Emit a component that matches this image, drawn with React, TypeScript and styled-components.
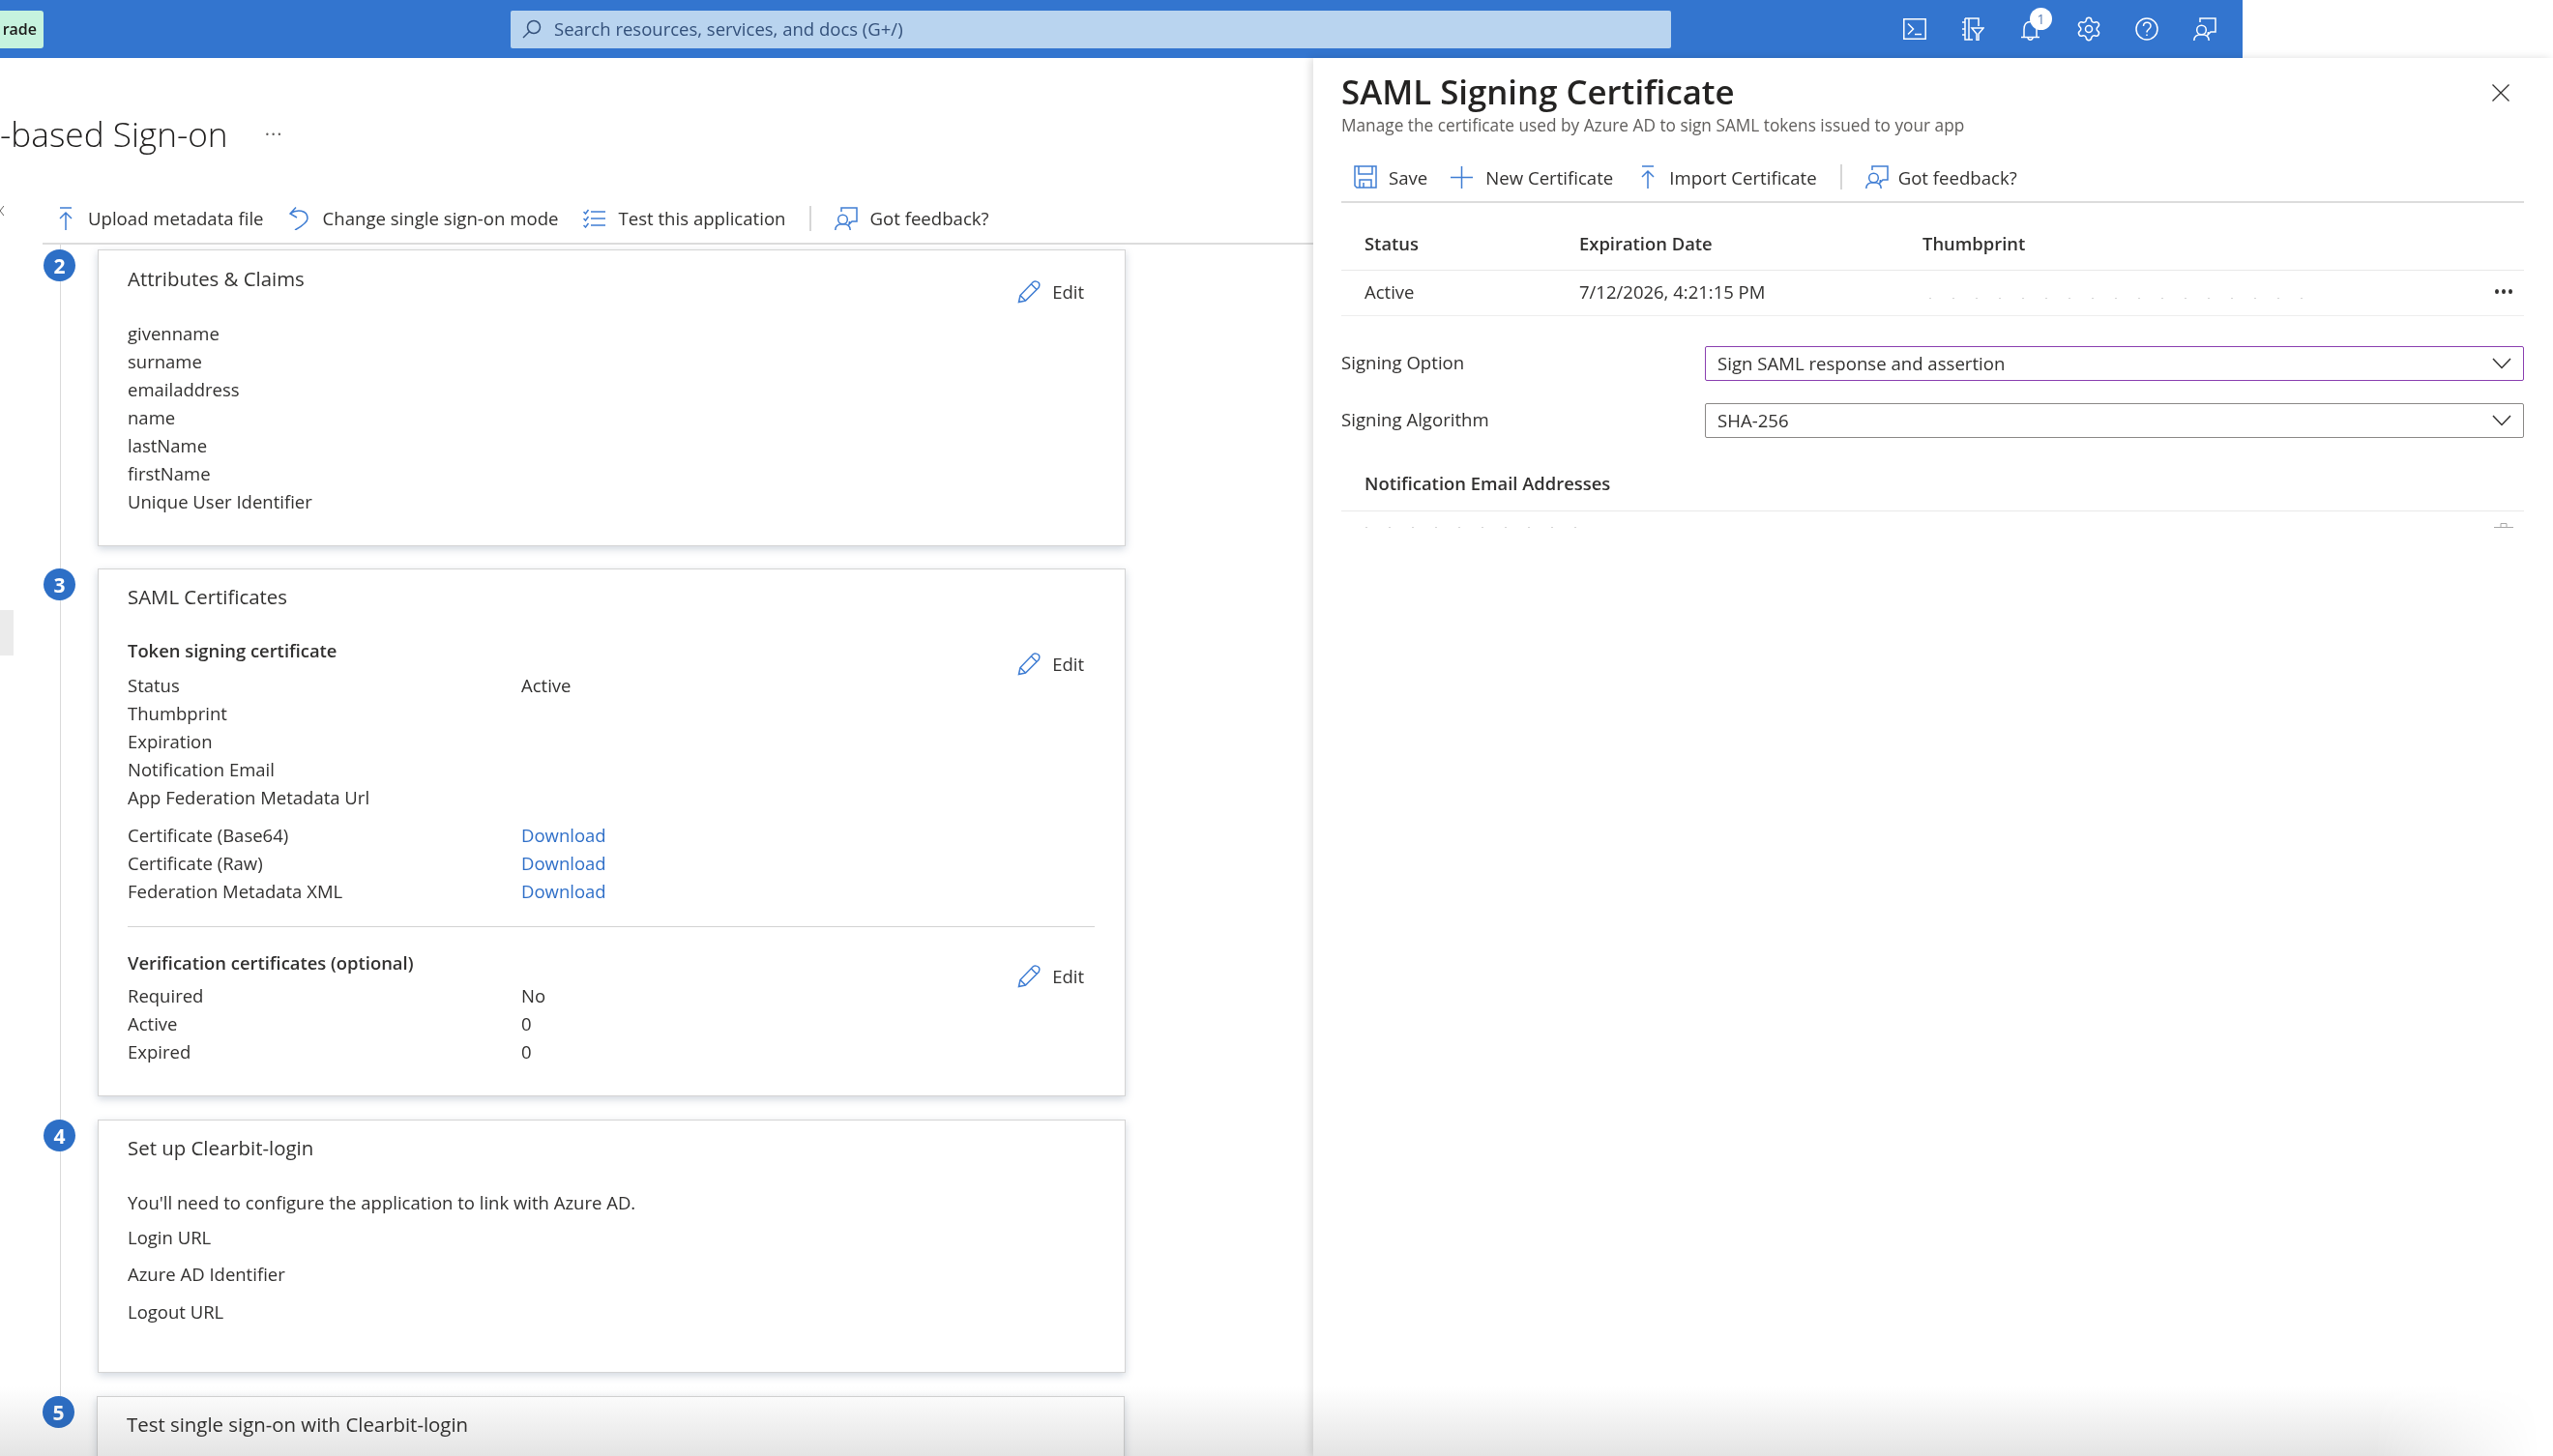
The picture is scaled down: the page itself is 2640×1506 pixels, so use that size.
import React from 'react';
import styled, { createGlobalStyle } from 'styled-components';
import { Settings } from 'lucide-react';

const Global = createGlobalStyle`
  html, body { margin:0; padding:0; background:#fff; }
  body { font-family:"Open Sans","Noto Sans","Liberation Sans",sans-serif; color:#323130; }
  * { box-sizing:border-box; }
`;

const BLUE = '#3f7dd3';

const Page = styled.div`
  width:2640px; height:1506px; overflow:hidden; position:relative; background:#fff;
  display:flex; flex-direction:column;
`;
const TopBar = styled.header`
  width:2319px; height:60px; background:#3375cf; flex:none;
  display:flex; align-items:center; position:relative;
`;
const Upgrade = styled.div`
  width:45px; height:39px; background:#c6f3de; border-radius:0 3px 3px 0; margin-right:483px;
  display:flex; align-items:center; justify-content:flex-end; padding-right:7px;
  font-size:16px; font-weight:600; color:#1b1a19; overflow:hidden;
`;
const Search = styled.div`
  width:1200px; height:39px; background:#b9d4ef; border-radius:2px;
  display:flex; align-items:center; padding:0 0 1px 12px; gap:13px;
  font-size:18.5px; color:#33507a;
`;
const TopIcons = styled.div`
  margin-left:240px; display:flex; align-items:center; gap:36px;
`;
const TopIcon = styled.span`
  width:24px; height:30px; display:flex; align-items:center; justify-content:center; position:relative;
  color:#fff;
  svg { flex:none; }
`;
const Badge = styled.span`
  position:absolute; top:-7px; left:11px; width:23px; height:23px; border-radius:50%;
  background:#fff; color:#5b7fb5; font-size:14px; display:flex; align-items:center; justify-content:center;
`;

const Body = styled.div`display:flex; flex:1; min-height:0;`;
const Main = styled.main`
  width:1358px; flex:none; overflow:hidden; position:relative;
`;
const TitleRow = styled.div`
  height:144px; padding-top:54px; display:flex; align-items:flex-start;
`;
const PageTitle = styled.h1`
  margin:0; font-size:35.2px; font-weight:300; color:#1f1e1d; white-space:nowrap; line-height:48px;
`;
const More = styled.span`
  margin-left:38px; font-size:20px; color:#605e5c; letter-spacing:1px; line-height:1; margin-top:15px;
`;
const CommandBar = styled.div<{ $panel?: boolean }>`
  display:flex; align-items:center; border-bottom:2px solid #dcdcdc;
  height:${p => (p.$panel ? '67px' : '49px')};
  padding-top:${p => (p.$panel ? '15px' : '0')};
  padding-bottom:${p => (p.$panel ? '0' : '4px')};
  padding-left:${p => (p.$panel ? '13px' : '17px')};
  margin-left:${p => (p.$panel ? '0' : '44px')};
`;
const Cmd = styled.span<{ $gap?: number; $ml?: number }>`
  display:flex; align-items:center; gap:${p => p.$gap ?? 12}px; margin-left:${p => p.$ml ?? 0}px;
  font-size:18.6px; color:#323130; white-space:nowrap;
`;
const CmdSep = styled.span`width:2px; height:26px; background:#d6d6d6; margin:0 24px;`;
const Collapse = styled.span`position:absolute; left:0; top:152px; display:flex;`;
const Steps = styled.div`
  position:relative; padding-left:101px; padding-top:5px;
  &:before { content:""; position:absolute; left:62px; top:0; height:1200px; width:1px; background:#d9d9d9; }
`;
const Step = styled.section<{ $mb?: number; $nudge?: number }>`
  position:relative; margin-bottom:${p => p.$mb ?? 24}px; margin-left:${p => p.$nudge ?? 0}px;
`;
const StepNum = styled.span`
  position:absolute; left:-56px; top:0; width:33px; height:33px; border-radius:50%;
  background:#2d6fc6; color:#fff; font-size:21px; font-weight:700; display:flex; align-items:center; justify-content:center;
`;
const Card = styled.div<{ $h: number }>`
  width:1063px; height:${p => p.$h}px; border:1px solid #d4d4d4; background:#fff; padding:0 30px;
  box-shadow:0 3px 8px rgba(90,110,140,.28); position:relative;
`;
const CardTitle = styled.div<{ $mb?: number; $pt?: number }>`
  font-size:20.4px; line-height:30px; padding-top:${p => p.$pt ?? 14}px; margin-bottom:${p => p.$mb ?? 26}px; color:#323130;
`;
const Line = styled.div<{ $h?: number }>`
  font-size:18.5px; line-height:${p => p.$h ?? 29}px; height:${p => p.$h ?? 29}px; color:#323130; white-space:nowrap;
`;
const KV = styled.div`
  display:grid; grid-template-columns:407px 1fr; font-size:18.5px; line-height:29px; color:#323130;
`;
const SubHead = styled.div<{ $mb?: number }>`
  font-size:18.4px; font-weight:600; line-height:30px; margin-bottom:${p => p.$mb ?? 6}px; color:#323130;
`;
const Link = styled.span`color:#2f6fc8;`;
const EditBtn = styled.span<{ $top: number }>`
  position:absolute; right:42px; top:${p => p.$top}px; display:flex; align-items:center; gap:12px;
  font-size:18.5px; line-height:28px; color:#323130;
`;
const Rule = styled.div`height:1px; background:#d2d2d2; margin:22px 0; width:1000px;`;
const Spacer = styled.div`height:10px;`;
const Fade = styled.div`
  position:absolute; left:0; right:0; bottom:0; height:72px; pointer-events:none; mix-blend-mode:multiply;
  background:linear-gradient(#fff, #e4e4e4);
  mask-image:linear-gradient(to right, #000 93%, transparent 99.5%);
`;
const Strip = styled.div`position:absolute; left:0; top:571px; width:14px; height:47px; background:#ebebeb;`;

const Panel = styled.aside`
  flex:1; background:#fff; padding:0 30px 0 29px; position:relative; min-width:0;
  box-shadow:-3px 0 8px rgba(0,0,0,.13);
`;
const PanelTitle = styled.h2`
  margin:0; padding-top:13px; font-size:34.8px; line-height:44px; font-weight:600; color:#242322;
`;
const PanelSub = styled.div`font-size:17.25px; line-height:26px; color:#605e5c;`;
const Close = styled.span`position:absolute; right:45px; top:27px; display:flex;`;
const TableHead = styled.div`
  display:grid; grid-template-columns:222px 355px 1fr; padding:13px 0 0 24px; height:70px; align-items:center;
  font-size:18.4px; font-weight:600; border-bottom:1px solid #e9e9e9;
`;
const TableRow = styled.div`
  display:grid; grid-template-columns:222px 355px 1fr 30px; padding:0 0 3px 24px; height:47px; align-items:center;
  font-size:18.5px; border-bottom:1px solid #ededed;
`;
const Specks = styled.span<{ $w: number }>`
  display:block; width:${p => p.$w}px; height:1px;
  background:repeating-linear-gradient(to right, #d4d4d4 0 2px, transparent 2px 24px);
`;
const ThumbCell = styled.span`display:flex; padding:14px 0 0 7px;`;
const Dots = styled.span`display:flex; gap:3px; justify-content:center; padding-right:12px;`;
const Dot = styled.i`width:5px; height:5px; border-radius:50%; background:#323130; display:block;`;
const Field = styled.div<{ $mt: number }>`
  display:grid; grid-template-columns:376px 1fr; align-items:center; margin-top:${p => p.$mt}px;
  font-size:18.6px;
  & > span { padding-bottom:3px; }
`;
const Select = styled.div<{ $focus?: boolean }>`
  height:36px; border:1px solid ${p => (p.$focus ? '#8a3fb0' : '#8a8886')}; border-radius:2px;
  display:flex; align-items:center; justify-content:space-between; padding:0 12px 2px;
  svg { margin-top:2px; }
`;
const EmailHead = styled.div`
  margin-top:30px; height:46px; padding:0 0 12px 24px; display:flex; align-items:center;
  font-size:18.4px; font-weight:600; border-bottom:1px solid #e9e9e9;
`;
const EmailRow = styled.div`
  height:17px; display:flex; align-items:flex-end; justify-content:space-between; padding:0 11px 0 25px;
`;

const Svg = styled.svg<{ $w?: number; $h?: number; $c?: string; $sw?: number }>`
  width:${p => p.$w ?? 24}px; height:${p => p.$h ?? 24}px; fill:none; stroke:${p => p.$c ?? BLUE};
  stroke-width:${p => p.$sw ?? 1.5}; flex:none; display:block;
`;

const UploadIcon = () => (
  <Svg viewBox="0 0 14 24" $w={14} $h={24}><path d="M1 1h12M7 24V6M1 12l6-6 6 6" /></Svg>
);
const UndoIcon = () => (
  <Svg viewBox="0 0 20 24" $w={20} $h={24}><path d="M7 .5L1 7l7 4M1 7c7-5 18-4 18 5 0 4-6 8-13 12" /></Svg>
);
const ListIcon = () => (
  <Svg viewBox="0 0 23 20" $w={23} $h={20}>
    <path d="M8 3h15M8 10h15M8 17h15M.5 3l2 2 3-4M.5 10l2 2 3-4M.5 17l2 2 3-4" />
  </Svg>
);
const FeedbackIcon = ({ c }: { c?: string }) => (
  <Svg viewBox="0 0 24 24" $w={24} $h={24} $c={c}>
    <path d="M7 5V1h16v14h-5l-3 3 .5-3" />
    <circle cx="8.500" cy="13" r="4.800" />
    <path d="M.8 24c0-5 3-6.200 7.700-6.200s7.700 1.200 7.700 6.200" />
  </Svg>
);
const PencilIcon = () => (
  <Svg viewBox="0 0 24 24" $w={24} $h={24}>
    <path d="M1.500 22.500l1.500-7L16.500 1.500c1.500-1 4.500-.5 6 1.500.5 1.500.5 3-.5 4.500L8.500 21zM3 15.500L8.500 21M14.500 4l5.500 5.500" />
  </Svg>
);
const EditAction = ({ top }: { top: number }) => (
  <EditBtn $top={top}><PencilIcon />Edit</EditBtn>
);
const Chevron = () => (
  <Svg viewBox="0 0 20 12" $w={20} $h={12} $c="#323130"><path d="M1 1l9 9.500L19 1" /></Svg>
);

const attrs = ['givenname', 'surname', 'emailaddress', 'name', 'lastName', 'firstName', 'Unique User Identifier'];

export default function App() {
  return (
    <Page>
      <Global />
      <TopBar>
        <Upgrade>rade</Upgrade>
        <Search>
          <Svg viewBox="0 0 20 20" $w={20} $h={20} $c="#33507a"><circle cx="12" cy="8" r="6.500" /><path d="M7.500 12.500L1 19" /></Svg>
          Search resources, services, and docs (G+/)
        </Search>
        <TopIcons>
          <TopIcon>
            <Svg viewBox="0 0 24 24" $c="#fff"><path d="M.8 1.800h22.400v20.400H.8zM5 6.500l5.500 5.500L5 17.500M12 17.500h7" /></Svg>
          </TopIcon>
          <TopIcon>
            <Svg viewBox="0 0 24 24" $c="#fff"><path d="M4 1h14v8M4 1v22h8M8 1v22M1 5h3M1 12h3M1 18h3M11 11h12l-5 6v7h-2v-7z" /></Svg>
          </TopIcon>
          <TopIcon>
            <Svg viewBox="0 0 24 24" $c="#fff"><path d="M2 20.500h19M5 20.500v-8c0-5 2.500-8 6.500-8s6.500 3 6.500 8v8M9 20.500c0 3.500 5 3.500 5 0" /></Svg>
            <Badge>1</Badge>
          </TopIcon>
          <TopIcon><Settings size={28} strokeWidth={1.3} color="#fff" /></TopIcon>
          <TopIcon>
            <Svg viewBox="0 0 24 24" $c="#fff">
              <circle cx="12" cy="12" r="11" />
              <path d="M8.500 9c0-5 7.500-5 7.500 0 0 3-4 3-4 6.500M12 17.500v1.500" />
            </Svg>
          </TopIcon>
          <TopIcon><FeedbackIcon c="#fff" /></TopIcon>
        </TopIcons>
      </TopBar>
      <Body>
        <Main>
          <Strip />
          <Collapse><Svg viewBox="0 0 4 12" $w={4} $h={12} $c="#605e5c" $sw={1}><path d="M4 1L0 6l4 5" /></Svg></Collapse>
          <TitleRow>
            <PageTitle>-based Sign-on</PageTitle>
            <More>···</More>
          </TitleRow>
          <CommandBar>
            <Cmd $gap={16}><UploadIcon />Upload metadata file</Cmd>
            <Cmd $ml={26} $gap={15}><UndoIcon />Change single sign-on mode</Cmd>
            <Cmd $ml={26} $gap={13}><ListIcon />Test this application</Cmd>
            <CmdSep />
            <Cmd $gap={13}><FeedbackIcon />Got feedback?</Cmd>
          </CommandBar>
          <Steps>
            <Step $mb={23}>
              <StepNum>2</StepNum>
              <Card $h={307}>
                <CardTitle $mb={27}>Attributes &amp; Claims</CardTitle>
                <EditAction top={29} />
                {attrs.map(a => <Line key={a}>{a}</Line>)}
              </Card>
            </Step>
            <Step>
              <StepNum>3</StepNum>
              <Card $h={546}>
                <CardTitle $pt={13} $mb={26}>SAML Certificates</CardTitle>
                <EditAction top={84} />
                <SubHead>Token signing certificate</SubHead>
                <KV><span>Status</span><span>Active</span></KV>
                <Line>Thumbprint</Line>
                <Line>Expiration</Line>
                <Line>Notification Email</Line>
                <Line>App Federation Metadata Url</Line>
                <Spacer />
                <KV><span>Certificate (Base64)</span><Link>Download</Link></KV>
                <KV><span>Certificate (Raw)</span><Link>Download</Link></KV>
                <KV><span>Federation Metadata XML</span><Link>Download</Link></KV>
                <Rule />
                <EditAction top={407} />
                <SubHead $mb={4}>Verification certificates (optional)</SubHead>
                <KV><span>Required</span><span>No</span></KV>
                <KV><span>Active</span><span>0</span></KV>
                <KV><span>Expired</span><span>0</span></KV>
              </Card>
            </Step>
            <Step>
              <StepNum>4</StepNum>
              <Card $h={262}>
                <CardTitle $pt={13} $mb={24}>Set up Clearbit-login</CardTitle>
                <Line $h={36}>You'll need to configure the application to link with Azure AD.</Line>
                <Line $h={36}>Login URL</Line>
                <Line $h={40}>Azure AD Identifier</Line>
                <Line $h={38}>Logout URL</Line>
              </Card>
            </Step>
            <Step $nudge={-1}>
              <StepNum>5</StepNum>
              <Card $h={120}>
                <CardTitle $pt={13}>Test single sign-on with Clearbit-login</CardTitle>
              </Card>
            </Step>
          </Steps>
        </Main>
        <Panel>
          <PanelTitle>SAML Signing Certificate</PanelTitle>
          <PanelSub>Manage the certificate used by Azure AD to sign SAML tokens issued to your app</PanelSub>
          <Close><Svg viewBox="0 0 18 18" $w={18} $h={18} $c="#323130" $sw={1.3}><path d="M.5.5l17 17M17.500.5l-17 17" /></Svg></Close>
          <CommandBar $panel>
            <Cmd $gap={12}>
              <Svg viewBox="0 0 24 24" $w={24} $h={24}><path d="M1 1h22v22H3l-2-2zM5 1v8h14V1M6 23v-8h12v8M10 18v5" /></Svg>
              Save
            </Cmd>
            <Cmd $ml={24} $gap={13}>
              <Svg viewBox="0 0 23 23" $w={23} $h={23}><path d="M11.500 0v23M0 11.500h23" /></Svg>
              New Certificate
            </Cmd>
            <Cmd $ml={29} $gap={15}><UploadIcon />Import Certificate</Cmd>
            <CmdSep />
            <Cmd $gap={10}><FeedbackIcon />Got feedback?</Cmd>
          </CommandBar>
          <TableHead><span>Status</span><span>Expiration Date</span><span>Thumbprint</span></TableHead>
          <TableRow>
            <span>Active</span><span>7/12/2026, 4:21:15 PM</span>
            <ThumbCell><Specks $w={395} /></ThumbCell>
            <Dots><Dot /><Dot /><Dot /></Dots>
          </TableRow>
          <Field $mt={31}>
            <span>Signing Option</span>
            <Select $focus>Sign SAML response and assertion<Chevron /></Select>
          </Field>
          <Field $mt={23}>
            <span>Signing Algorithm</span>
            <Select>SHA-256<Chevron /></Select>
          </Field>
          <EmailHead>Notification Email Addresses</EmailHead>
          <EmailRow>
            <Specks $w={218} />
            <Svg viewBox="0 0 20 5" $w={20} $h={5} $c="#a8a8a8" $sw={1}><path d="M0 4.500h20M7 4.500V.5h6v4" /></Svg>
          </EmailRow>
        </Panel>
      </Body>
      <Fade />
    </Page>
  );
}
